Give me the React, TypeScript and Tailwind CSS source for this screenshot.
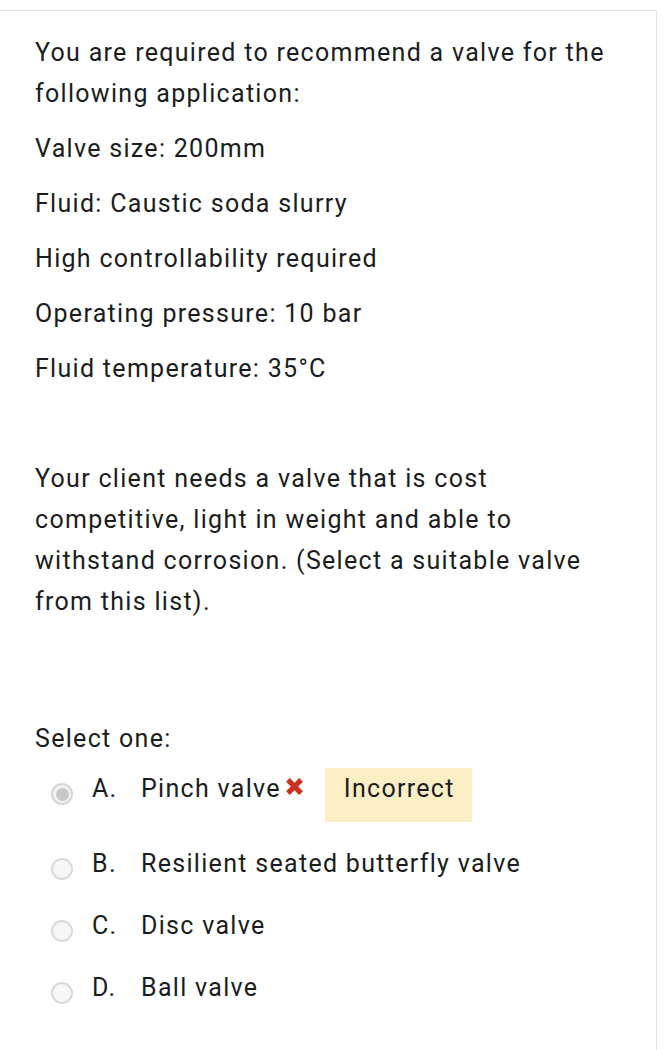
import React from 'react';

const options = [
  { letter: 'A.', label: 'Pinch valve', checked: true, wrong: true },
  { letter: 'B.', label: 'Resilient seated butterfly valve' },
  { letter: 'C.', label: 'Disc valve' },
  { letter: 'D.', label: 'Ball valve' },
];

function Radio({ checked }: { checked?: boolean }) {
  return (
    <span
      className={
        'mt-[15px] flex h-[22px] w-[22px] shrink-0 items-center justify-center rounded-full border-2 ' +
        (checked ? 'border-[#d6d6d6] bg-[#f2f2f2]' : 'border-[#dadada] bg-[#f7f7f7]')
      }
    >
      {checked && <span className="h-[13px] w-[13px] rounded-full bg-[#c8c8c8]" />}
    </span>
  );
}

export default function App() {
  return (
    <div className="min-h-[1050px] bg-white pt-[10px] font-['Roboto',sans-serif] text-[25px] leading-[41px] tracking-[1.3px] text-[#1a1d20]">
      <div className="min-h-[1040px] w-[657px] border-t border-r border-[#e3e3e3] pl-[35px] pr-[40px] pt-[21px]">
        <div className="[&>p]:mb-[14px]">
          <p>You are required to recommend a valve for the following application:</p>
          <p>Valve size: 200mm</p>
          <p>Fluid: Caustic soda slurry</p>
          <p>High controllability required</p>
          <p>Operating pressure: 10 bar</p>
          <p>Fluid temperature: 35°C</p>
          <p>&nbsp;</p>
          <p>
            Your client needs a valve that is cost competitive, light in weight and able to withstand corrosion.
            (Select a suitable valve from this list).
          </p>
        </div>

        <div className="mt-[96px]">Select one:</div>
        <div className="mt-[9px] flex flex-col gap-[21px] pl-[16px]">
          {options.map(o => (
            <div key={o.letter} className="flex items-start">
              <Radio checked={o.checked} />
              <span className="ml-[19px] w-[49px] shrink-0">{o.letter}</span>
              <span>{o.label}</span>
              {o.wrong && (
                <>
                  <svg viewBox="0 0 20 20" className="ml-[3px] mt-[8px] h-[21px] w-[21px] shrink-0">
                    <path d="M2 5.5 L5.5 2 L10 6.5 L14.5 2 L18 5.5 L13.5 10 L18 14.5 L14.5 18 L10 13.5 L5.5 18 L2 14.5 L6.5 10 Z" fill="#ca3120" />
                  </svg>
                  <div className="ml-[20px] bg-[#fcefc5] pl-[19px] pr-[17px] pb-[13px]">Incorrect</div>
                </>
              )}
            </div>
          ))}
        </div>
      </div>
    </div>
  );
}
